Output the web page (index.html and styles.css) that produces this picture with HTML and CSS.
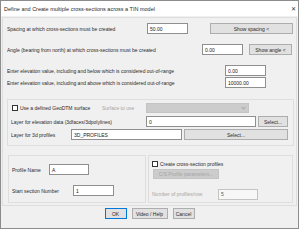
FILE: index.html
```html
<!DOCTYPE html>
<html>
<head>
<meta charset="utf-8">
<link rel="stylesheet" href="styles.css">
</head>
<body>
<div class="win">
  <div class="titlebar">
    <span class="title">Define and Create multiple cross-sections across a TIN model</span>
    <span class="close">✕</span>
  </div>
  <div class="panel">
    <div class="row r1">
      <span class="lbl" style="width:140px">Spacing at which cross-sections must be created</span>
      <div class="field w40">50.00</div>
      <div class="btn" style="width:83px;margin-left:22px">Show spacing &lt;</div>
    </div>
    <div class="row r2">
      <span class="lbl" style="width:195px">Angle (bearing from north) at which cross-sections must be created</span>
      <div class="field w40">0.00</div>
      <div class="btn" style="width:43px;margin-left:6px">Show angle &lt;</div>
    </div>
    <div class="row r3">
      <span class="lbl" style="width:218px">Enter elevation value, including and below which is considered out-of-range</span>
      <div class="field w40">0.00</div>
    </div>
    <div class="row r4">
      <span class="lbl" style="width:218px">Enter elevation value, including and above which is considered out-of-range</span>
      <div class="field w40">10000.00</div>
    </div>

    <div class="group g2">
      <div class="row ra">
        <label class="chkwrap" style="width:91px"><span class="chk"></span><span>Use a defined GeoDTM surface</span></label>
        <span class="lbl dis" style="width:44px">Surface to use</span>
        <div class="select" style="width:103px"><span class="chev"></span></div>
      </div>
      <div class="row rb">
        <span class="lbl" style="width:135px">Layer for elevation data (3dfaces/3dpolylines)</span>
        <div class="field" style="width:110px">0</div>
        <div class="btn" style="width:30px;margin-left:2px">Select...</div>
      </div>
      <div class="row rc">
        <span class="lbl" style="width:60px">Layer for 3d profiles</span>
        <div class="field" style="width:111px">3D_PROFILES</div>
        <div class="btn" style="width:104px;margin-left:2px">Select...</div>
      </div>
    </div>

    <div class="pair">
      <div class="group g3">
        <div class="row rp">
          <span class="lbl" style="width:37px">Profile Name</span>
          <div class="field" style="width:40px">A</div>
        </div>
        <div class="row rs">
          <span class="lbl" style="width:61px">Start section Number</span>
          <div class="field" style="width:41px">1</div>
        </div>
      </div>
      <div class="group g4">
        <label class="chkwrap row rcs"><span class="chk"></span><span>Create cross-section profiles</span></label>
        <div class="btn disbtn">C/S Profile parameters...</div>
        <div class="row rn">
          <span class="lbl dis" style="width:66px">Number of profiles/row</span>
          <div class="field disfield" style="width:40px">5</div>
        </div>
      </div>
    </div>
  </div>
  <div class="actions">
    <div class="btn ok">OK</div>
    <div class="btn" style="width:36px">Video / Help</div>
    <div class="btn" style="width:22px">Cancel</div>
  </div>
</div>
</body>
</html>
```

FILE: styles.css
```css
* { box-sizing: border-box; margin: 0; padding: 0; }

html, body {
  width: 300px;
  height: 230px;
  overflow: hidden;
  background: #ffffff;
}

body {
  font-family: "Liberation Sans", Arial, sans-serif;
  font-size: 5px;
  color: #2a2a2a;
}

.win {
  width: 299px;
  height: 229px;
  border: 1px solid #8c8c8c;
  background: #f0f0f0;
  display: flex;
  flex-direction: column;
}

.titlebar {
  height: 15px;
  background: #ffffff;
  display: flex;
  align-items: center;
  justify-content: space-between;
  padding: 0 2px 0 3px;
  font-size: 5.5px;
  color: #2a2a2a;
}

.close {
  font-size: 6px;
  color: #333;
  width: 6px;
  text-align: center;
}

.panel {
  margin: 1px 1px 0 1px;
  border: 1px solid #dedede;
  padding: 5px 2px 2px 4px;
}

.row {
  display: flex;
  align-items: center;
  white-space: nowrap;
}

.lbl {
  flex: none;
  overflow: hidden;
}

.dis { color: #a6a6a6; }

.r1 { height: 11px; }
.r2 { height: 11px; margin-top: 10px; }
.r3 { height: 11px; margin-top: 10px; }
.r4 { height: 11px; margin-top: 1px; }

.field {
  flex: none;
  height: 11px;
  background: #ffffff;
  border: 1px solid #8f8f8f;
  padding-left: 2px;
  display: flex;
  align-items: center;
  color: #1a1a1a;
}

.w40 { width: 41px; }

.disfield {
  background: #f7f7f7;
  border-color: #c4c4c4;
  color: #555;
}

.btn {
  flex: none;
  height: 11px;
  background: #e1e1e1;
  border: 1px solid #adadad;
  display: flex;
  align-items: center;
  justify-content: center;
  color: #2a2a2a;
}

.group {
  border: 1px solid #dedede;
}

.g2 {
  margin-top: 11px;
  padding: 3px 2px 5px 3px;
}

.ra { height: 10px; }
.rb { height: 11px; margin-top: 3px; }
.rc { height: 11px; margin-top: 2px; }

.chkwrap {
  display: flex;
  align-items: center;
  flex: none;
  white-space: nowrap;
  padding-left: 1px;
}

.chk {
  width: 6px;
  height: 6px;
  border: 1px solid #333;
  background: #fff;
  margin-right: 2px;
  flex: none;
}

.select {
  flex: none;
  height: 10px;
  background: #cccccc;
  border: 1px solid #c4c4c4;
  position: relative;
}

.chev {
  position: absolute;
  right: 3px;
  top: 2px;
  width: 3px;
  height: 3px;
  border-right: 1px solid #a8a8a8;
  border-bottom: 1px solid #a8a8a8;
  transform: rotate(45deg);
}

.pair {
  display: flex;
  margin-top: 9px;
}

.g3 {
  width: 138px;
  margin-left: 1px;
  padding: 8px 2px 6px 3px;
}

.rp { height: 11px; }
.rs { height: 11px; margin-top: 10px; }

.g4 {
  width: 145px;
  margin-left: 2px;
  padding: 4px 2px 3px 3px;
  display: flex;
  flex-direction: column;
  align-items: flex-start;
}

.rcs { height: 7px; padding-left: 0; }

.disbtn {
  width: 66px;
  height: 10px;
  margin-top: 2px;
  margin-left: 1px;
  background: #cccccc;
  border-color: #c4c4c4;
  color: #a6a6a6;
}

.rn { height: 10px; margin-top: 10px; }

.actions {
  display: flex;
  justify-content: center;
  gap: 5px;
  margin-top: 2px;
}

.ok {
  width: 22px;
  border-color: #0078d7;
}
```
